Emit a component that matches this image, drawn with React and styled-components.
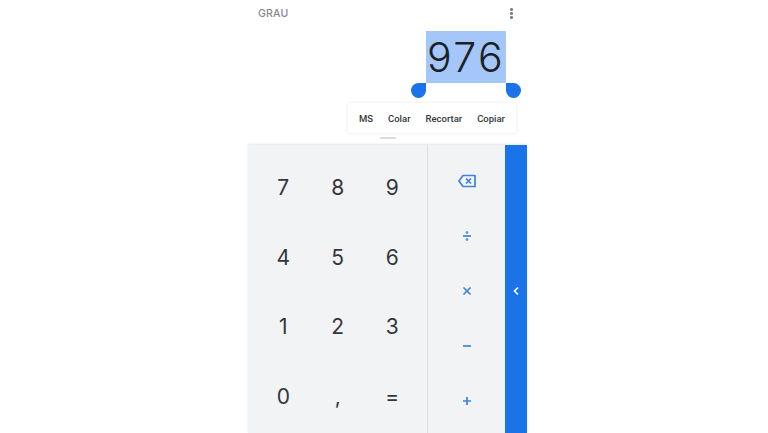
import React from "react";
import styled, { createGlobalStyle } from "styled-components";

const GlobalStyle = createGlobalStyle`
  html, body {
    margin: 0;
    padding: 0;
    background: #fff;
    overflow: hidden;
  }
`;

const Page = styled.div`
  width: 768px;
  height: 433px;
  box-sizing: border-box;
  padding-left: 248px;
  overflow: hidden;
  background: #fff;
`;

const Phone = styled.div`
  position: relative;
  width: 279px;
  height: 433px;
  display: flex;
  flex-direction: column;
  font-family: "Roboto", "Liberation Sans", sans-serif;
`;

const Header = styled.div`
  height: 27px;
  display: flex;
  align-items: center;
  justify-content: space-between;
  padding: 0 14px 0 10px;
`;

const Mode = styled.div`
  font-family: "Inter", "Liberation Sans", sans-serif;
  font-size: 10.5px;
  font-weight: 500;
  letter-spacing: 0.2px;
  color: #84888d;
`;

const Dots = styled.div`
  display: flex;
  flex-direction: column;
  gap: 1.6px;
`;

const Dot = styled.span`
  width: 2.6px;
  height: 2.6px;
  border-radius: 50%;
  background: #7b7f84;
`;

const Display = styled.div`
  height: 56px;
  padding: 4px 21px 0 0;
  display: flex;
  justify-content: flex-end;
  align-items: flex-start;
`;

const Selection = styled.div`
  position: relative;
  width: 80px;
  height: 52px;
  background: #a5c6f8;
  color: #1c2126;
  font-family: "Inter", "Liberation Sans", sans-serif;
  font-weight: 300;
  font-size: 41px;
  line-height: 53px;
  letter-spacing: 2.4px;
  text-align: center;
  white-space: nowrap;
`;

const Handle = styled.span`
  position: absolute;
  top: 52px;
  width: 15px;
  height: 15px;
  background: #1a73e8;
  ${props =>
    props.side === "left"
      ? "left: -15px; border-radius: 50% 0 50% 50%;"
      : "right: -15px; border-radius: 0 50% 50% 50%;"}
`;

const Popup = styled.div`
  position: absolute;
  top: 103px;
  left: 100px;
  width: 168px;
  height: 30px;
  box-sizing: border-box;
  padding: 0 11px;
  display: flex;
  align-items: center;
  justify-content: space-between;
  background: #fff;
  border-radius: 2px;
  box-shadow: 0 0 3px rgba(60, 64, 67, 0.14);
`;

const PopupItem = styled.span`
  font-size: 9.5px;
  font-weight: 500;
  color: #33373b;
`;

const Grip = styled.div`
  height: 58px;
  box-sizing: border-box;
  display: flex;
  justify-content: center;
  align-items: flex-end;
  padding-bottom: 6px;
`;

const GripBar = styled.span`
  width: 16px;
  height: 2px;
  border-radius: 1px;
  background: #d9dbde;
`;

const Keyboard = styled.div`
  flex: 1;
  display: flex;
  min-height: 0;
  background: #f1f3f5;
  box-shadow: 0 -1px 2px rgba(60, 64, 67, 0.14);
`;

const Digits = styled.div`
  width: 180px;
  box-sizing: border-box;
  padding: 8px 8px 0;
  display: grid;
  grid-template-columns: repeat(3, 54.5px);
  grid-auto-rows: 69.5px;
  border-right: 1px solid #dcdfe3;
`;

const Digit = styled.div`
  display: flex;
  align-items: center;
  justify-content: center;
  font-family: "Inter", "Liberation Sans", sans-serif;
  font-size: 21px;
  color: #33373b;
`;

const Ops = styled.div`
  width: 77px;
  padding-top: 8px;
  display: grid;
  grid-auto-rows: 55px;
`;

const Op = styled.div`
  display: flex;
  align-items: center;
  justify-content: center;
`;

const Drawer = styled.div`
  width: 22px;
  box-sizing: border-box;
  padding-top: 4px;
  background: #1a73e8;
  display: flex;
  align-items: center;
  justify-content: center;
`;

const OpIcon = styled.svg`
  width: ${props => props.size || 12}px;
  height: ${props => props.size || 12}px;
  fill: none;
  stroke: #3f82d8;
  stroke-width: 1.7;
`;

const digits = ["7", "8", "9", "4", "5", "6", "1", "2", "3", "0", ",", "="];

export default function App() {
  return (
    <Page>
      <GlobalStyle />
      <Phone>
        <Header>
          <Mode>GRAU</Mode>
          <Dots>
            <Dot />
            <Dot />
            <Dot />
          </Dots>
        </Header>
        <Display>
          <Selection>
            976
            <Handle side="left" />
            <Handle side="right" />
          </Selection>
        </Display>
        <Grip>
          <GripBar />
        </Grip>
        <Popup>
          <PopupItem>MS</PopupItem>
          <PopupItem>Colar</PopupItem>
          <PopupItem>Recortar</PopupItem>
          <PopupItem>Copiar</PopupItem>
        </Popup>
        <Keyboard>
          <Digits>
            {digits.map(d => (
              <Digit key={d}>{d}</Digit>
            ))}
          </Digits>
          <Ops>
            <Op>
              <OpIcon viewBox="0 0 18 13" size={18}>
                <path d="M5 1h12v11H5L1 6.5z" strokeLinejoin="round" />
                <path d="M8 4l5 5M13 4l-5 5" />
              </OpIcon>
            </Op>
            <Op>
              <OpIcon viewBox="0 0 12 12">
                <path d="M2 6h8" />
                <circle cx="6" cy="2.5" r="0.5" />
                <circle cx="6" cy="9.5" r="0.5" />
              </OpIcon>
            </Op>
            <Op>
              <OpIcon viewBox="0 0 12 12">
                <path d="M2.5 2.5l7 7M9.5 2.5l-7 7" />
              </OpIcon>
            </Op>
            <Op>
              <OpIcon viewBox="0 0 12 12">
                <path d="M2 6h8" />
              </OpIcon>
            </Op>
            <Op>
              <OpIcon viewBox="0 0 12 12">
                <path d="M2 6h8M6 2v8" />
              </OpIcon>
            </Op>
          </Ops>
          <Drawer>
            <svg width="8" height="10" viewBox="0 0 8 10" fill="none" stroke="#fff" strokeWidth="1.6">
              <path d="M6 1.5L2.5 5 6 8.5" />
            </svg>
          </Drawer>
        </Keyboard>
      </Phone>
    </Page>
  );
}
